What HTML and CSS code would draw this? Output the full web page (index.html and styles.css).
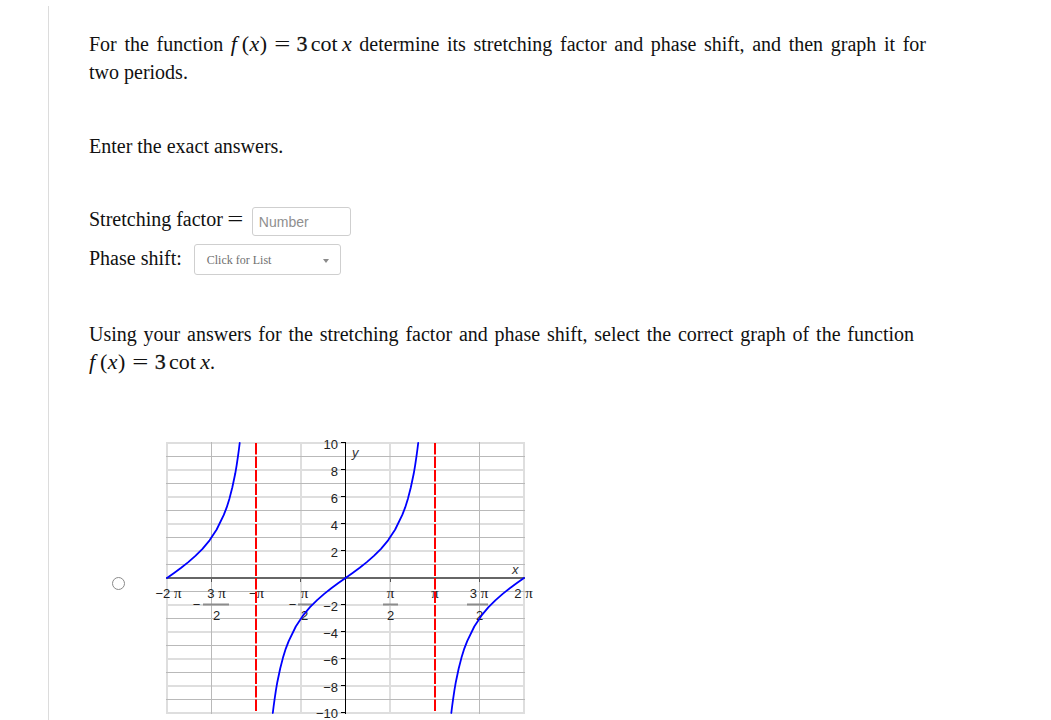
FILE: index.html
```html
<!DOCTYPE html>
<html lang="en">
<head>
<meta charset="utf-8">
<title>Cotangent question</title>
<link rel="stylesheet" href="styles.css">
</head>
<body>
<div class="page">
  <p class="p1"><span class="jline">For the function <span class="math"><i class="mi f">f</i><span class="mo">(</span><i class="mi">x</i><span class="mo">)</span><span class="rel">=</span><span class="mn">3</span><span class="fn">cot</span><i class="mi">x</i></span> determine its stretching factor and phase shift, and then graph it for</span>two periods.</p>
  <p class="p2">Enter the exact answers.</p>
  <div class="row r1">
    <span class="lbl">Stretching factor<span class="math"><span class="rel">=</span></span></span>
    <input class="num" type="text" placeholder="Number">
  </div>
  <div class="row r2">
    <span class="lbl">Phase shift:</span>
    <div class="sel"><span class="sel-text">Click for List</span><span class="arrow"></span></div>
  </div>
  <p class="p3"><span class="jline">Using your answers for the stretching factor and phase shift, select the correct graph of the function</span><span class="math"><i class="mi f">f</i><span class="mo">(</span><i class="mi">x</i><span class="mo">)</span><span class="rel">=</span><span class="mn">3</span><span class="fn">cot</span><i class="mi">x</i></span>.</p>
  <div class="choice">
    <span class="radio"></span>
    <svg class="graph" width="400" height="287" viewBox="140 433 400 287" xmlns="http://www.w3.org/2000/svg">
      <path class="grid-light" d="M166 443H525M166 470H525M166 497H525M166 524H525M166 551H525M166 605H525M166 632H525M166 659H525M166 686H525M166 713H525M167 442V714M301 442V714M390 442V714M524 442V714"/>
      <path class="grid-dark" d="M166 456.5H525M166 483.5H525M166 510.5H525M166 537.5H525M166 564.5H525M166 591.5H525M166 618.5H525M166 645.5H525M166 672.5H525M166 699.5H525M211.5 442V714M479.5 442V714"/>
      <path class="frac-bar" d="M203 604.5H229M298 604.5H312M383 604.5H398M467 604.5H488"/>
      <g class="tl">
        <text x="338" y="449" text-anchor="end">10</text>
        <text x="338" y="476" text-anchor="end">8</text>
        <text x="338" y="503" text-anchor="end">6</text>
        <text x="338" y="530" text-anchor="end">4</text>
        <text x="338" y="557" text-anchor="end">2</text>
        <text x="338" y="611" text-anchor="end">−2</text>
        <text x="338" y="638" text-anchor="end">−4</text>
        <text x="338" y="665" text-anchor="end">−6</text>
        <text x="338" y="692" text-anchor="end">−8</text>
        <text x="338" y="718" text-anchor="end">−10</text>

        <text x="168.5" y="598" text-anchor="middle">−2 <tspan class="pi">π</tspan></text>
        <text x="196.5" y="608.5" text-anchor="middle">−</text>
        <text x="216.5" y="598" text-anchor="middle">3 <tspan class="pi">π</tspan></text>
        <text x="216.5" y="619.5" text-anchor="middle">2</text>
        <text x="256.5" y="598" text-anchor="middle">−<tspan class="pi">π</tspan></text>
        <text x="292.5" y="608.5" text-anchor="middle">−</text>
        <text x="304.5" y="598" text-anchor="middle"><tspan class="pi">π</tspan></text>
        <text x="304.5" y="619.5" text-anchor="middle">2</text>
        <text x="390.5" y="598" text-anchor="middle"><tspan class="pi">π</tspan></text>
        <text x="390.5" y="619.5" text-anchor="middle">2</text>
        <text x="435" y="598" text-anchor="middle"><tspan class="pi">π</tspan></text>
        <text x="479" y="598" text-anchor="middle">3 <tspan class="pi">π</tspan></text>
        <text x="479.5" y="619.5" text-anchor="middle">2</text>
        <text x="523.5" y="598" text-anchor="middle">2 <tspan class="pi">π</tspan></text>
      </g>
      <text class="axl" x="512" y="574">x</text>
      <text class="axl" x="352" y="457">y</text>
      <path class="x-axis" d="M166 578H525"/>
      <path class="x-ticks" d="M211.5 579V582M256.5 579V582M300.5 579V582M390.5 579V582M434.5 579V582M479.5 579V582"/>
      <path class="y-axis" d="M345.5 442V714"/>
      <path class="y-ticks" d="M341 442.5H345M341 469.5H345M341 496.5H345M341 523.5H345M341 550.5H345M341 604.5H345M341 631.5H345M341 658.5H345M341 685.5H345M341 712.5H345"/>
      <path class="asym" d="M256 443V713M435 443V713"/>
      <polyline class="curve" points="167,578 174.1,572.9 181.2,567.7 188.3,562.1 195.4,555.9 202.5,548.8 209.6,540.3 216.7,529.5 223.8,514.9 226.7,507.4 229.5,498.4 232.3,487.5 235.2,473.8 236.6,465.6 238,456.1 238.9,449.5 239.7,443"/>
      <polyline class="curve" points="272.8,713 273.6,706.5 274.5,699.9 275.9,690.4 277.3,682.2 280.2,668.5 283,657.6 285.8,648.6 288.7,641.1 295.8,626.5 302.9,615.7 310,607.2 317.1,600.1 324.2,593.9 331.3,588.3 338.4,583.1 345.5,578 352.6,572.9 359.7,567.7 366.8,562.1 373.9,555.9 381,548.8 388.1,540.3 395.2,529.5 402.3,514.9 405.2,507.4 408,498.4 410.8,487.5 413.7,473.8 415.1,465.6 416.5,456.1 417.4,449.5 418.2,443"/>
      <polyline class="curve" points="451.3,713 452.1,706.5 453,699.9 454.4,690.4 455.8,682.2 458.7,668.5 461.5,657.6 464.3,648.6 467.2,641.1 474.3,626.5 481.4,615.7 488.5,607.2 495.6,600.1 502.7,593.9 509.8,588.3 516.9,583.1 524,578"/>
    </svg>
  </div>
</div>
</body>
</html>
```

FILE: styles.css
```css
html, body {
  margin: 0;
  padding: 0;
  background: #fff;
  overflow: hidden;
}

body {
  font-family: "Liberation Serif", "Times New Roman", serif;
  color: #111;
  font-size: 20px;
  line-height: 28px;
}

.page {
  display: flow-root;
  margin: 6px 0 0 48px;
  border-left: 1px solid #dcdcdc;
  padding-left: 40px;
  height: 714px;
  box-sizing: border-box;
}

p {
  margin: 0;
}

.jline {
  display: block;
  text-align: justify;
  text-align-last: justify;
}

.p1 {
  margin-top: 24px;
  width: 837px;
}

.p2 {
  margin-top: 46px;
}

.p3 {
  margin-top: 45px;
  width: 825px;
}

/* math */
.math {
  white-space: nowrap;
  font-size: 22px;
  line-height: 20px;
}

.mi {
  font-style: italic;
}

.mi.f {
  margin-right: 0.2em;
}

.mo {
  margin: 0 0.02em;
}

.mn {
  -webkit-text-stroke: 0.3px #111;
}

.rel {
  display: inline-block;
  transform: scaleX(1.3);
  margin: 0 0.38em;
}

.fn {
  margin: 0 0.2em 0 0.14em;
}

/* rows */
.row {
  display: flex;
  align-items: flex-start;
}

.r1 {
  margin-top: 47px;
}

.r2 {
  margin-top: 8px;
}

.lbl {
  margin-top: -2px;
  white-space: nowrap;
  flex: none;
}

.r2 .lbl {
  margin-top: 0;
}

.r1 .lbl .rel {
  margin: 0 0 0 0.3em;
}

.num {
  flex: none;
  box-sizing: border-box;
  width: 99px;
  height: 29px;
  margin: 0 0 0 10px;
  padding: 0 6px;
  border: 1px solid #cfcfcf;
  border-radius: 3px;
  font-family: "Liberation Sans", Arial, sans-serif;
  font-size: 14px;
  color: #333;
  background: #fff;
  outline: none;
}

.num::placeholder {
  color: #8f8f8f;
}

.sel {
  flex: none;
  box-sizing: border-box;
  width: 147px;
  height: 31px;
  margin-left: 12px;
  border: 1px solid #cfcfcf;
  border-radius: 3px;
  display: flex;
  align-items: center;
  justify-content: space-between;
  padding: 0 11px 0 12px;
}

.sel-text {
  font-family: "Liberation Serif", "Times New Roman", serif;
  font-size: 12px;
  line-height: 16px;
  color: #6f6f6f;
}

.arrow {
  width: 0;
  height: 0;
  border-left: 3.5px solid transparent;
  border-right: 3.5px solid transparent;
  border-top: 4px solid #8a8a8a;
  margin-top: 2px;
}

/* choice with graph */
.choice {
  display: flex;
  align-items: flex-start;
  margin-top: 57px;
  margin-left: 23px;
}

.radio {
  box-sizing: border-box;
  width: 13px;
  height: 13px;
  margin-top: 144px;
  border: 1px solid #8a8a8a;
  border-radius: 50%;
  background: #fff;
  flex: none;
}

.graph {
  display: block;
  margin-left: 15px;
  flex: none;
}

.grid-light {
  stroke: #dedede;
  stroke-width: 2;
  fill: none;
}

.grid-dark {
  stroke: #b9b9b9;
  stroke-width: 1;
  fill: none;
}

.frac-bar {
  stroke: #8c8c8c;
  stroke-width: 2;
  fill: none;
}

.tl text {
  font-family: "Liberation Sans", Arial, sans-serif;
  font-size: 13px;
  fill: #222;
}

.tl .pi {
  font-family: "Liberation Serif", "Times New Roman", serif;
  font-size: 15px;
}

.axl {
  font-family: "Liberation Sans", Arial, sans-serif;
  font-style: italic;
  font-size: 13px;
  fill: #333;
}

.x-axis {
  stroke: #666;
  stroke-width: 2;
  fill: none;
}

.x-ticks {
  stroke: #555;
  stroke-width: 1;
  fill: none;
}

.y-axis {
  stroke: #000;
  stroke-width: 1;
  fill: none;
}

.y-ticks {
  stroke: #000;
  stroke-width: 1;
  fill: none;
}

.asym {
  stroke: #ff0000;
  stroke-width: 2;
  stroke-dasharray: 11.5 2;
  fill: none;
}

.curve {
  stroke: #0000ff;
  stroke-width: 1.8;
  fill: none;
  stroke-linejoin: round;
  stroke-linecap: round;
}
```
